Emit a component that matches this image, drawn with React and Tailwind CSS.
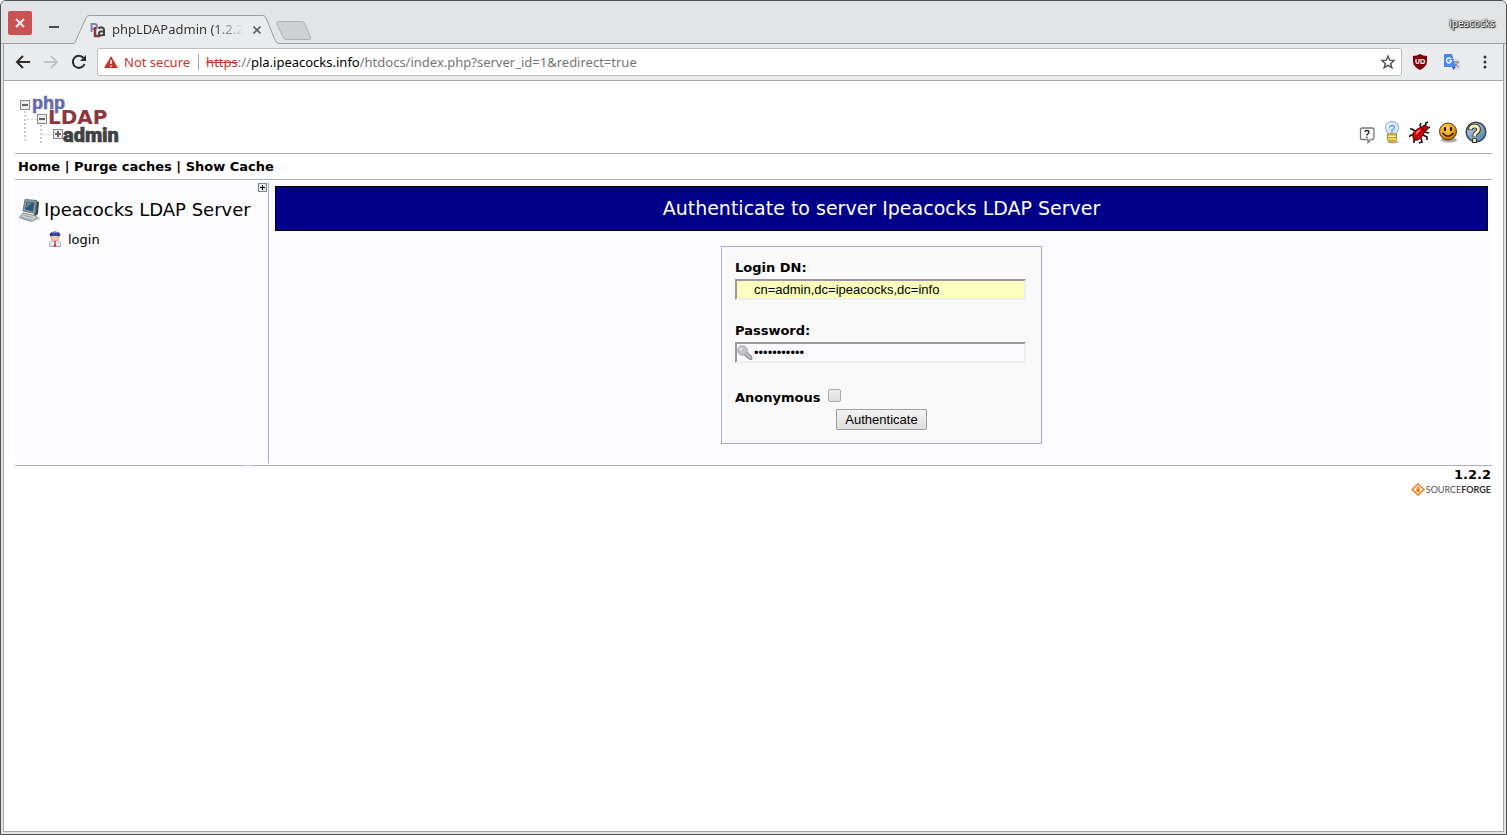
import React, { useState } from 'react';

function LogoIcon() {
  return (
    <svg width="104" height="52" viewBox="0 0 104 52" className="overflow-visible" role="img" aria-label="phpLDAPadmin">
      <g stroke="#cecece" strokeWidth="2" strokeDasharray="2 2" fill="none">
        <path d="M6 18V50" />
        <path d="M8 26.500H18" strokeWidth="1" />
        <path d="M22 32V50" />
        <path d="M24 41.500H33" strokeWidth="1" />
      </g>
      <g fill="#ececec" stroke="#8a8a8a">
        <rect x="1.500" y="7.500" width="9" height="9" />
        <rect x="18.500" y="21.500" width="9" height="9" />
        <rect x="34.500" y="36.500" width="9" height="9" />
      </g>
      <g stroke="#666" strokeWidth="2">
        <path d="M3 12H9" />
        <path d="M20 26H26" />
        <path d="M36 41H42M39 38V44" />
      </g>
      <text x="13" y="16" fontFamily="Liberation Sans, sans-serif" fontWeight="bold" fontSize="18" fill="#6669ae" stroke="#6669ae" strokeWidth="0.600">php</text>
      <text x="29" y="31" fontFamily="DejaVu Sans, sans-serif" fontWeight="bold" fontSize="20" fill="#8e363c">LDAP</text>
      <text x="44" y="49" fontFamily="Roboto, sans-serif" fontWeight="900" fontSize="20" fill="#404144" stroke="#404144" strokeWidth="0.600">admin</text>
    </svg>
  );
}

function FaviconIcon() {
  return (
    <svg width="16" height="16" viewBox="0 0 16 16" aria-hidden="true">
      <path d="M1.500 10V2H4.500Q7 2 7 4.500T4.500 7H2" fill="none" stroke="#8083b4" strokeWidth="2" />
      <path d="M5 5V14H10" fill="none" stroke="#8e363c" strokeWidth="2.500" />
      <path d="M8.500 6.500Q10 5 12 5.500Q14 6 14 8V14M14 9.500H11Q9 9.500 9 11.500T11 13.500Q13 13.500 14 12" fill="none" stroke="#444" strokeWidth="2" />
    </svg>
  );
}

function BubbleIcon() {
  return (
    <svg width="18" height="22" viewBox="0 0 18 22" aria-hidden="true">
      <path d="M3 6H13.500Q15 6 15 7.500V16Q15 17.500 13.500 17.500H12L9 20.500V17.500H3Q1.500 17.500 1.500 16V7.500Q1.500 6 3 6Z" fill="#fafafa" stroke="#7a7a7a" strokeWidth="1.300" />
      <path d="M6 10Q6 8.500 8 8.500Q10 8.500 10 10Q10 11.500 8 12.500V13.500M8 14.800V16" stroke="#222" strokeWidth="1.300" fill="none" />
    </svg>
  );
}

function BulbIcon() {
  return (
    <svg width="18" height="24" viewBox="0 0 18 24" aria-hidden="true">
      <ellipse cx="9" cy="21" rx="6" ry="1.500" fill="#bbb" />
      <path d="M8 0.500C4 0.500 1.500 3 1.500 6.500C1.500 9.500 3.500 11 4 13H12C12.500 11 14.500 9.500 14.500 6.500C14.500 3 12 0.500 8 0.500Z" fill="#d8e9fc" stroke="#7ba0cf" />
      <path d="M3.500 6Q4 2.500 8 2.500" stroke="#fff" strokeWidth="2" fill="none" />
      <path d="M5.500 6.500Q5.500 4.500 8 4.500T10.500 6.500Q10.500 8 8 9V12" stroke="#6c9de0" strokeWidth="1.400" fill="none" />
      <path d="M3.500 13H12.500V18.500L10.500 21H5.500L3.500 18.500Z" fill="#f3cd35" stroke="#a4842a" />
      <path d="M4 15.500H12M4 18H12" stroke="#fff0a0" />
      <path d="M4 16.500H12M5 19H11" stroke="#c39a20" />
    </svg>
  );
}

function BugIcon() {
  return (
    <svg width="22" height="24" viewBox="0 0 22 24" aria-hidden="true">
      <path d="M6 10L3 8H1M6 14H2L0 16M8 17L5 19V22M12 17L13 21L10 22M14 14L18 16V19M13 8L11 4L12 2M16 6L17 2L19 1M17 8L21 6M16 11L20 12" stroke="#111" strokeWidth="1.600" fill="none" />
      <path d="M15 4L19 6L18 9L15 10L12 7Z" fill="#d00000" stroke="#200" />
      <path d="M4 12Q7 8 12 6L16 10Q15 15 9 19Q5 20 4 17Z" fill="#e00000" stroke="#300" />
      <path d="M7 13Q9 10 11 9" stroke="#ff7777" strokeWidth="1.500" fill="none" />
      <path d="M7 17L14 9" stroke="#500" />
    </svg>
  );
}

function SmileIcon() {
  return (
    <svg width="20" height="22" viewBox="0 0 20 22" aria-hidden="true">
      <defs>
        <radialGradient id="smile" cx="40%" cy="30%" r="70%">
          <stop offset="0" stopColor="#ffd45c" />
          <stop offset="0.600" stopColor="#eea11f" />
          <stop offset="1" stopColor="#b46a08" />
        </radialGradient>
      </defs>
      <ellipse cx="11" cy="18" rx="8" ry="2.500" fill="#aaa" />
      <circle cx="10" cy="9.500" r="8.500" fill="url(#smile)" stroke="#5a3a08" />
      <ellipse cx="7" cy="7" rx="1.200" ry="2.200" fill="#2a1800" />
      <ellipse cx="13" cy="7" rx="1.200" ry="2.200" fill="#2a1800" />
      <path d="M4.500 11Q10 17.500 15.500 11" stroke="#2a1800" strokeWidth="1.500" fill="none" />
    </svg>
  );
}

function HelpIcon() {
  return (
    <svg width="22" height="24" viewBox="0 0 22 24" aria-hidden="true">
      <defs>
        <linearGradient id="help" x1="0" y1="0" x2="1" y2="1">
          <stop offset="0" stopColor="#c3d6e8" />
          <stop offset="1" stopColor="#4a76a4" />
        </linearGradient>
      </defs>
      <circle cx="11" cy="11" r="9.800" fill="url(#help)" stroke="#34485c" strokeWidth="1.500" />
      <path d="M5.500 9Q5.500 5 9.500 5Q13.500 5 13.500 8.500Q13.500 10.500 11 12Q9.500 13 9.500 15.500M9.500 17.500V22" stroke="#221c08" strokeWidth="4.500" fill="none" />
      <path d="M5.500 8.500Q5.500 5 9.500 5Q13.500 5 13.500 8.500Q13.500 10.500 11 12Q9.500 13 9.500 15.500M9.500 18V21" stroke="#fff1b4" strokeWidth="2.800" fill="none" />
    </svg>
  );
}

function ComputerIcon() {
  return (
    <svg width="22" height="24" viewBox="0 0 22 24" aria-hidden="true">
      <ellipse cx="12" cy="20" rx="9" ry="3" fill="#c9cccc" />
      <path d="M16 2L20 4L19 16L15 19Z" fill="#3b484e" />
      <path d="M6 1.500L17.500 2.500L16 15.500L4 13Z" fill="#8f9ca1" stroke="#66747a" />
      <path d="M7.500 3.500L15.500 4.500L14 13.500L6 11.500Z" fill="#2d5878" />
      <path d="M8 4L13 4.800L7 10Z" fill="#6288a4" />
      <path d="M4 15L15.500 17.500L18 20L12.500 23.500L0.500 19.500Z" fill="#ced5d3" stroke="#7f8b8e" />
      <path d="M4 17L14.500 19.800M2.500 19L13 22" stroke="#98a3a7" />
    </svg>
  );
}

function UserIcon() {
  return (
    <svg width="12" height="18" viewBox="0 0 12 18" aria-hidden="true">
      <path d="M0.500 15.500V12.500Q1 10 4 9.500H8Q11 10 11.500 12.500V15.500Z" fill="#e9ecf6" stroke="#a1a7c4" />
      <circle cx="6" cy="6" r="4" fill="#f5c9a6" stroke="#cc9878" strokeWidth="0.600" />
      <path d="M0.500 3.500Q1.500 0.500 6 0.500T11.500 3.500L10.500 5.500Q6 4 1.500 5.500Z" fill="#31429c" />
      <path d="M3 2Q6 0.500 9 2" stroke="#7f90d8" fill="none" />
      <path d="M5 10H7L6.500 12L7.500 15.500H4.500L5.500 12Z" fill="#d43228" />
    </svg>
  );
}

function KeyIcon() {
  return (
    <svg width="16" height="16" viewBox="0 0 16 16" aria-hidden="true">
      <path d="M6 9L9 6L15 11.500V14.500H12.500L11 13L9.500 12.500Z" fill="#a5a5a5" stroke="#858585" strokeWidth="0.800" />
      <circle cx="5.500" cy="5.500" r="4.800" fill="#c4c4c4" stroke="#9a9a9a" strokeWidth="0.800" />
      <circle cx="4" cy="4" r="1.500" fill="#e7e7e7" />
      <path d="M8.500 8L13.500 13" stroke="#ddd" />
    </svg>
  );
}

function BrowserTabs() {
  return (
    <div className="flex h-[43px] items-end border-b border-[#9b9ea1] bg-[#e3e4e6]">
      <button type="button" aria-label="Close window" className="mb-[8px] ml-[7px] flex h-6 w-6 items-center justify-center rounded-xs bg-[#cb5152]">
        <svg width="10" height="10" viewBox="0 0 10 10" stroke="#f4e4e4" strokeWidth="2.200"><path d="M1 1L9 9M9 1L1 9" /></svg>
      </button>
      <button type="button" aria-label="Minimize" className="mb-[10px] ml-[17px] h-3 w-[10px]">
        <span className="block h-[2px] bg-[#4b4b4b]" />
      </button>
      <div className="relative -mb-px ml-[14px] h-[29px] w-[206px] shrink-0">
        <svg className="absolute inset-0" width="206" height="29" viewBox="0 0 206 29" aria-hidden="true">
          <path d="M0 28.500H1Q2 28 3 25L13 3Q14 0.500 16 0.500H190Q192 0.500 193 3L202 25Q203 28 206 28.500V29H0Z" fill="#ebecee" />
          <path d="M0 28.500H1Q2 28 3 25L13 3Q14 0.500 16 0.500H190Q192 0.500 193 3L202 25Q203 28 206 28.500" fill="none" stroke="#9b9ea1" />
        </svg>
        <div className="relative flex h-[29px] items-center pt-px pl-[17px]">
          <FaviconIcon />
          <span className="ml-[6px] w-[136px] bg-linear-to-r from-[#333] from-75% to-transparent to-97% bg-clip-text font-['Noto_Sans'] text-[13px] whitespace-nowrap text-transparent">phpLDAPadmin (1.2.2</span>
          <button type="button" aria-label="Close tab" className="ml-[5px]">
            <svg width="8" height="8" viewBox="0 0 8 8" stroke="#606060" strokeWidth="1.600"><path d="M0.500 0.500L7.500 7.500M7.500 0.500L0.500 7.500" /></svg>
          </button>
        </div>
      </div>
      <button type="button" aria-label="New tab" className="mb-[3px] -ml-[3px]">
        <svg width="36" height="19" viewBox="0 0 36 19"><path d="M2 0.500H26Q28 0.500 29 3L34.500 16Q35 18.500 33 18.500H10Q8 18.500 7 16L1 3Q0 0.500 2 0.500Z" fill="#cfd0d1" stroke="#b0b1b2" /></svg>
      </button>
      <span className="mr-[11px] mb-[12px] ml-auto font-['Noto_Sans'] text-[10px] leading-4 text-white [text-shadow:0_0_1px_#222,0_0_1px_#222,0_0_2px_#222,1px_1px_1px_#222]">ipeacocks</span>
    </div>
  );
}

function AddressBar() {
  return (
    <div className="mx-[2px] flex h-[37px] items-center border-x border-b border-x-[#9b9ea1] border-b-[#a5a7aa] bg-[#ebecee] pl-[11px]">
      <button type="button" aria-label="Back">
        <svg width="16" height="14" viewBox="0 0 16 14" fill="none" stroke="#2c2c2c" strokeWidth="2"><path d="M15 7H2M8 1L2 7L8 13" /></svg>
      </button>
      <button type="button" aria-label="Forward" className="ml-[12px]">
        <svg width="16" height="14" viewBox="0 0 16 14" fill="none" stroke="#c3c4c6" strokeWidth="2"><path d="M1 7H14M8 1L14 7L8 13" /></svg>
      </button>
      <button type="button" aria-label="Reload" className="ml-[12px]">
        <svg width="16" height="16" viewBox="0 0 16 16" fill="none" stroke="#2c2c2c" strokeWidth="2"><path d="M13.500 10A6 6 0 1 1 12.500 4" /><path d="M15 1V7H9Z" fill="#2c2c2c" stroke="none" /></svg>
      </button>
      <div className="ml-[10px] flex h-7 flex-1 items-center rounded-xs border border-[#bfc0c2] bg-white px-[6px] font-['Noto_Sans'] text-[13px] whitespace-nowrap">
        <svg width="15" height="13" viewBox="0 0 15 13" aria-hidden="true"><path d="M7 0L14 12H0Z" fill="#c5372c" /><path d="M7 4V8M7 9.500V11" stroke="#fff" strokeWidth="1.500" /></svg>
        <span className="ml-[5px] pt-px text-[#c5372c]">Not secure</span>
        <span className="mr-[7px] ml-[8px] h-4 w-px bg-[#a5a5a5]" />
        <span className="flex-1 pt-px text-[#757575]">
          <span className="text-[#c5372c] line-through">https</span>://<span className="text-black">pla.ipeacocks.info</span>/htdocs/index.php?server_id=1&amp;redirect=true
        </span>
        <button type="button" aria-label="Bookmark this page">
          <svg width="14" height="14" viewBox="0 0 14 14" fill="none" stroke="#505050" strokeWidth="1.400"><path d="M7 1L8.700 5.200L13.200 5.500L9.700 8.400L10.900 12.800L7 10.400L3.100 12.800L4.300 8.400L0.800 5.500L5.300 5.200Z" /></svg>
        </button>
      </div>
      <button type="button" aria-label="uBlock" className="ml-[11px]">
        <svg width="14" height="16" viewBox="0 0 14 16"><path d="M7 0Q10 2 14 2V7Q14 13 7 16Q0 13 0 7V2Q4 2 7 0Z" fill="#800008" /><path d="M3 5V8Q3 9.500 4.500 9.500T6 8V5M8 5.500V9.500H9Q11.500 9.500 11.500 7.500T9 5.500Z" fill="none" stroke="#fff" strokeWidth="1.200" /></svg>
      </button>
      <button type="button" aria-label="Translate" className="ml-[17px]">
        <svg width="16" height="16" viewBox="0 0 16 16"><path d="M6 5H16V16H10Z" fill="#dcdcdc" /><path d="M9 8H15M12 7V8M14 8Q13 11 10 13M10.500 9Q12 12 15 13" stroke="#6d8292" fill="none" /><path d="M1 0H8L11.500 13H1Q0 13 0 12V1Q0 0 1 0Z" fill="#4a86ee" /><path d="M8 13H11.500L9.500 16Z" fill="#3050b8" /><path d="M7 5Q6 3.800 5 3.800Q2.500 4 2.500 6.500Q2.700 9 5 9T7.200 6.700H5" stroke="#fff" strokeWidth="1.300" fill="none" /></svg>
      </button>
      <button type="button" aria-label="Menu" className="mr-[16px] ml-[23px]">
        <svg width="4" height="14" viewBox="0 0 4 14" fill="#333"><circle cx="2" cy="2" r="1.500" /><circle cx="2" cy="7" r="1.500" /><circle cx="2" cy="12" r="1.500" /></svg>
      </button>
    </div>
  );
}

function LoginForm() {
  const [login, setLogin] = useState('cn=admin,dc=ipeacocks,dc=info');
  const [password, setPassword] = useState('supersecret');
  const [anonymous, setAnonymous] = useState(false);

  return (
    <form onSubmit={(e) => e.preventDefault()} className="mx-auto mt-[15px] w-[321px] border border-[#aaaacc] bg-[#f9f9f9] px-[13px] pt-[12px] pb-[13px]">
      <label htmlFor="login" className="mb-[2px] block leading-[18px] font-bold">Login DN:</label>
      <input id="login" type="text" value={login} onChange={(e) => setLogin(e.target.value)}
             className="block h-[21px] w-[291px] border-2 border-t-[#999] border-r-[#eee] border-b-[#eee] border-l-[#999] bg-[#faffbd] pl-[17px] font-['Liberation_Sans'] text-[13px]" />
      <label htmlFor="password" className="mt-[22px] mb-[2px] block leading-[18px] font-bold">Password:</label>
      <div className="flex h-[21px] w-[291px] items-center border-2 border-t-[#999] border-r-[#eee] border-b-[#eee] border-l-[#999] bg-[#fbfbff]">
        <KeyIcon />
        <input id="password" type="password" value={password} onChange={(e) => setPassword(e.target.value)}
               className="ml-px h-[17px] min-w-0 flex-1 font-['Liberation_Sans'] text-[13px]" />
      </div>
      <div className="mt-6 flex h-5 items-start">
        <label htmlFor="anonymous" className="leading-[22px] font-bold">Anonymous</label>
        <input id="anonymous" type="checkbox" checked={anonymous} onChange={(e) => setAnonymous(e.target.checked)}
               className="mt-[2px] ml-[8px] h-[13px] w-[13px] appearance-none rounded-xs border border-[#aaa] bg-linear-to-b from-[#eee] to-[#ddd] checked:from-[#666] checked:to-[#666]" />
      </div>
      <button type="submit" className="mx-auto mt-[2px] block h-[21px] w-[91px] rounded-[1px] border border-[#a0a0a0] bg-linear-to-b from-[#f5f5f5] to-[#dddddd] font-['Liberation_Sans'] text-[13px] leading-[18px]">
        Authenticate
      </button>
    </form>
  );
}

function App() {
  return (
    <div className="flex min-h-screen flex-col overflow-hidden rounded-t-md border border-[#505052] bg-[#e3e4e6] font-['DejaVu_Sans'] text-[13px] text-black">
      <BrowserTabs />
      <AddressBar />
      <div className="mx-[2px] mb-[2px] flex-1 border border-t-0 border-[#a5a5a5] bg-white px-[11px]">
        <header className="flex h-[73px] items-end justify-between border-b border-[#aaaacc] pb-[8px] pl-[4px]">
          <a href="#home"><LogoIcon /></a>
          <div className="flex items-center gap-[7px] pr-[5px]">
            <a href="#forum" aria-label="Forum"><BubbleIcon /></a>
            <a href="#request" aria-label="Request feature"><BulbIcon /></a>
            <a href="#bug" aria-label="Report a bug"><BugIcon /></a>
            <a href="#donate" aria-label="Donate"><SmileIcon /></a>
            <a href="#help" aria-label="Help"><HelpIcon /></a>
          </div>
        </header>
        <nav className="h-[26px] border-b border-[#aaaacc] pl-[3px] leading-[25px] font-bold">
          <a href="#home">Home</a> | <a href="#purge">Purge caches</a> | <a href="#cache">Show Cache</a>
        </nav>
        <div className="flex gap-[2px] pt-[2px] pb-[2px]">
          <aside className="w-[254px] shrink-0 border-r border-[#aaaacc] bg-[#fcfcfe]">
            <div className="flex justify-end pt-px pr-px">
              <button type="button" aria-label="Expand">
                <svg width="9" height="9" viewBox="0 0 9 9"><rect x="0.500" y="0.500" width="8" height="8" fill="#dfe6ea" stroke="#7c8890" /><path d="M2 4.500H7M4.500 2V7" stroke="#000" /></svg>
              </button>
            </div>
            <div className="mt-[6px] flex items-center gap-[3px] pl-[4px] text-lg leading-6">
              <ComputerIcon />
              <h2 className="whitespace-nowrap">Ipeacocks LDAP Server</h2>
            </div>
            <a href="#login" className="mt-[9px] ml-[34px] flex items-center gap-[7px] leading-4">
              <UserIcon />
              login
            </a>
          </aside>
          <main className="flex-1 bg-[#fcfcfe] px-[4px] pt-[4px] pb-[19px]">
            <h1 className="h-[45px] border border-black bg-[#000088] text-center text-[19px] leading-[43px] text-white">
              Authenticate to server Ipeacocks LDAP Server
            </h1>
            <LoginForm />
          </main>
        </div>
        <div className="flex gap-[2px]">
          <span className="h-px w-[232px] bg-[#aaaacc]" />
          <span className="h-px flex-1 bg-[#aaaacc]" />
        </div>
        <footer className="flex flex-col items-end pr-px">
          <span className="leading-[17px] font-bold">1.2.2</span>
          <a href="#sourceforge" className="flex items-center gap-px font-['Lato'] text-[9px] leading-[13px] text-[#555]">
            <svg width="14" height="13" viewBox="0 0 14 13" aria-hidden="true"><path d="M7 1L12.800 6.500L7 12L1.200 6.500Z" fill="#fff" stroke="#f58220" strokeWidth="1.700" /><path d="M7 3Q9.500 5.500 9 7.500Q8.500 9.500 7 9.500Q5 9 5 7Q5 6 6 5Z" fill="#f58220" /></svg>
            <span>SOURCE<b className="text-[#333]">FORGE</b></span>
          </a>
        </footer>
      </div>
    </div>
  );
}

export default App;
